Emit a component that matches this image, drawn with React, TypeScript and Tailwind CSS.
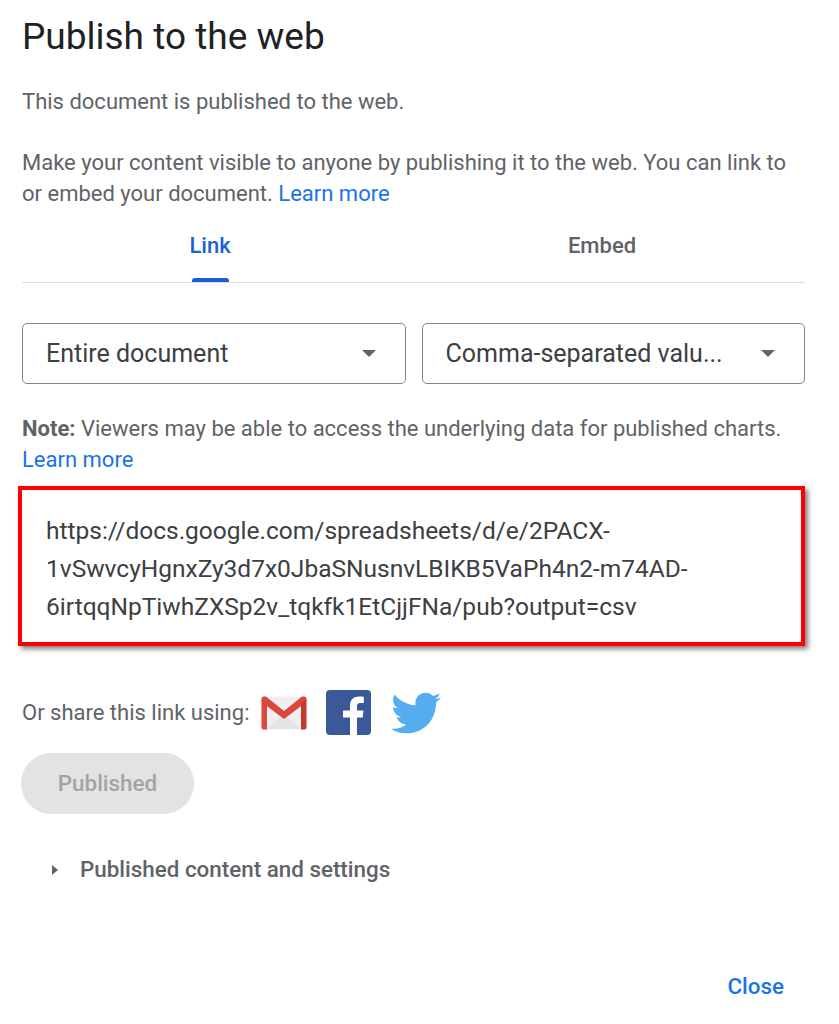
import { FaTwitter } from "react-icons/fa";

function GmailIcon() {
  return (
    <svg width="46" height="34" viewBox="0 0 46 34" className="block">
      <rect x="0.5" y="0.5" width="45" height="33" rx="2" fill="#efefef" />
      <path d="M6 33 L23 18 L40 33 Z" fill="#e3e3e3" />
      <path d="M0.5 3 Q0.5 0.5 3 0.5 L5 0.5 L23 15 L41 0.5 L43 0.5 Q45.5 0.5 45.5 3 L45.5 6 L23 23 L0.5 6 Z" fill="#d9483b" />
      <path d="M0.5 4 L6 8 L6 33.5 L2.5 33.5 Q0.5 33.5 0.5 31.5 Z" fill="#d9483b" />
      <path d="M45.5 4 L40 8 L40 33.5 L43.5 33.5 Q45.5 33.5 45.5 31.5 Z" fill="#c5392d" />
    </svg>
  );
}

function FacebookIcon() {
  return (
    <svg width="45" height="45" viewBox="0 0 45 45" className="block">
      <rect width="45" height="45" rx="4" fill="#3b5998" />
      <path
        d="M31 45 L31 27.5 L36.6 27.5 L37.5 20.5 L31 20.5 L31 16.3 C31 14.3 31.6 13 34.4 13 L37.8 13 L37.8 6.8 C37.2 6.7 35.2 6.5 32.9 6.5 C28 6.5 24 9.5 24 15.4 L24 20.5 L17 20.5 L17 27.5 L24 27.5 L24 45 Z"
        fill="#ffffff"
      />
    </svg>
  );
}

function Caret() {
  return <div className="h-0 w-0 border-x-[7px] border-t-[7px] border-x-transparent border-t-[#5f6368]" />;
}

function Select({ label }: { label: string }) {
  return (
    <div className="flex h-[61px] flex-1 items-center justify-between rounded-[5px] border border-[#80868b] pl-[23px] pr-[29px] text-[25px] text-[#3c4043]">
      <span>{label}</span>
      <Caret />
    </div>
  );
}

export default function App() {
  return (
    <div
      className="h-[1024px] w-[839px] overflow-hidden bg-white pl-[22px] pr-[34px] text-[22px] text-[#5f6368]"
      style={{ fontFamily: "Roboto, sans-serif" }}
    >
      <h1 className="pt-[14px] text-[37px] leading-[46px] font-normal text-[#202124]">Publish to the web</h1>

      <p className="mt-[26px] leading-[31px]">This document is published to the web.</p>

      <p className="mt-[30px] leading-[31px]">
        Make your content visible to anyone by publishing it to the web. You can link to
        <br />
        or embed your document. <span className="text-[#1a73e8]">Learn more</span>
      </p>

      <div className="mt-[4px] border-b border-[#dadce0]">
        <div className="-ml-[8px] flex h-[69px] w-[784px] font-medium">
          <div className="flex flex-1 flex-col items-center justify-between pt-[20px]">
            <span className="leading-[26px] text-[#1a62d6]">Link</span>
            <div className="h-[4px] w-[37px] rounded-t-[3px] bg-[#1a5fd0]" />
          </div>
          <div className="flex-1 pt-[20px] text-center leading-[26px]">Embed</div>
        </div>
      </div>

      <div className="mt-[40px] flex gap-4">
        <Select label="Entire document" />
        <Select label="Comma-separated valu..." />
      </div>

      <p className="mt-[29px] leading-[31px]">
        <span className="font-bold">Note:</span> Viewers may be able to access the underlying data for published charts.{" "}
        <span className="text-[#1a73e8]">Learn more</span>
      </p>

      <div className="-ml-[4px] mt-[11px] h-[160px] border-4 border-[#ff0000] pl-6 pt-[22px] text-[24.5px] leading-[38px] text-[#3c4043] shadow-[3px_3px_5px_rgba(0,0,0,0.5)]">
        https://docs.google.com/spreadsheets/d/e/2PACX-
        <br />
        1vSwvcyHgnxZy3d7x0JbaSNusnvLBIKB5VaPh4n2-m74AD-
        <br />
        6irtqqNpTiwhZXSp2v_tqkfk1EtCjjFNa/pub?output=csv
      </div>

      <div className="mt-[44px] flex h-[45px] items-center">
        <span>Or share this link using:</span>
        <div className="ml-[12px]">
          <GmailIcon />
        </div>
        <div className="ml-[19px]">
          <FacebookIcon />
        </div>
        <FaTwitter className="ml-[20px] text-[50px] text-[#55acee]" />
      </div>

      <div className="-ml-px mt-[18px] flex h-[61px] w-[173px] items-center justify-center rounded-full bg-[#e3e3e3] text-[22.4px] font-medium text-[#a3a3a3]">
        Published
      </div>

      <div className="mt-[42px] flex h-[28px] items-center pl-[30px] text-[22.4px] font-medium">
        <div className="h-0 w-0 border-y-[5px] border-l-[6px] border-y-transparent border-l-[#5f6368]" />
        <span className="ml-[22px]">Published content and settings</span>
      </div>

      <div className="mt-[88px] pr-[21px] text-right text-[22.4px] font-medium leading-[28px] text-[#1a73e8]">Close</div>
    </div>
  );
}
